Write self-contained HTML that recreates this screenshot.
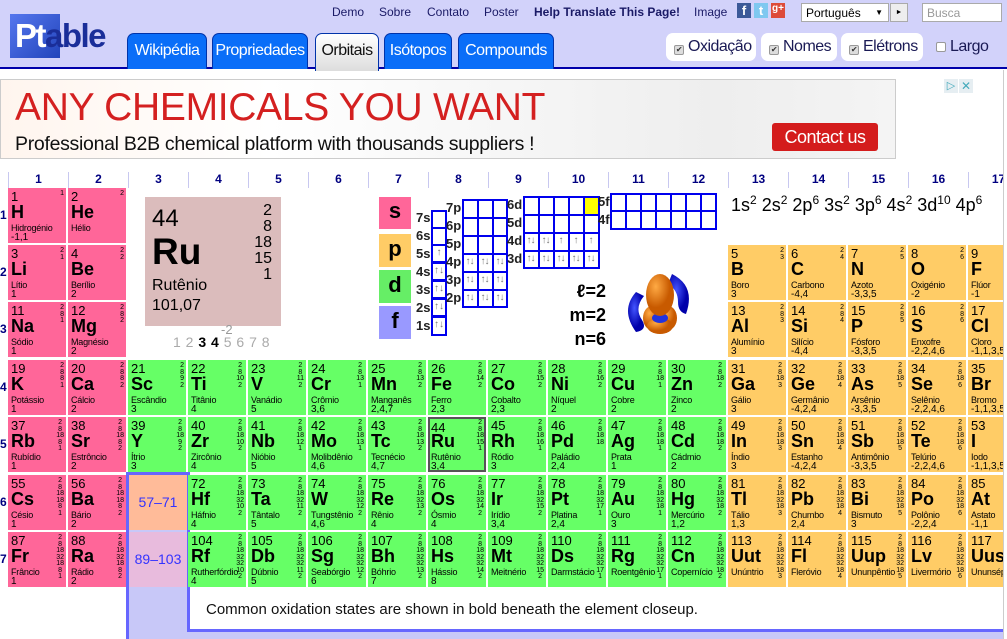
<!DOCTYPE html>
<html><head><meta charset="utf-8">
<style>
*{margin:0;padding:0;box-sizing:border-box}
body{width:1007px;height:639px;overflow:hidden;position:relative;background:#fff;font-family:"Liberation Sans",sans-serif;color:#000}
.a{position:absolute}
#hd{left:0;top:0;width:1007px;height:69px;background:#d2d2fa;border-bottom:2px solid #0000aa}
.lk{position:absolute;top:5px;font-size:12px;color:#1a1a66}
.tab{position:absolute;top:33px;height:36px;background:#0a6ef8;border:1px solid #0033aa;border-bottom:none;border-radius:7px 7px 0 0;color:#fff;font-size:16px;text-align:center;line-height:34px;letter-spacing:-0.5px}
.pill{position:absolute;top:33px;height:28px;background:#fff;border-radius:7px;font-size:16px;line-height:28px;color:#1a1a55;padding-left:8px;letter-spacing:-0.5px}
.cb{display:inline-block;width:10px;height:10px;border:1px solid #999;border-radius:2px;background:#ddd;margin-right:4px;vertical-align:-1px;font-size:8px;line-height:8px;text-align:center;color:#333}
.c{position:absolute;width:58px;height:55px;overflow:hidden}
.c i{position:absolute;left:3px;top:1px;font-size:13px;font-style:normal}
.c b{position:absolute;left:3px;top:14px;font-size:18px}
.c u{position:absolute;left:3px;top:35px;font-size:9px;text-decoration:none;white-space:nowrap;letter-spacing:-0.2px}
.c em{position:absolute;left:3px;top:45px;font-size:10px;font-style:normal;line-height:10px}
.c s{position:absolute;right:2px;top:3px;font-size:7px;line-height:6.5px;text-align:center;text-decoration:none}
.S{background:#ff6699}.D{background:#66ff66}.P{background:#ffcc66}
.gh{position:absolute;top:172px;width:60px;text-align:center;font-size:12px;font-weight:bold;color:#000080;border-left:1px solid #c8c8f0;height:16px}
.pn{position:absolute;left:0;font-size:12px;font-weight:bold;color:#000080}
.bx{position:absolute;border:2px solid #0000ee;background:#fff;font-size:10px;color:#777;line-height:14px;text-align:center;overflow:hidden}
.ol{position:absolute;font-size:13px;font-weight:bold;color:#222}
.ar{position:absolute;width:15px;text-align:center;font-size:10px;color:#777;line-height:18px;height:18px;letter-spacing:-1px}
</style></head><body>
<div id="hd" class="a"></div>
<div class="a" style="left:10px;top:14px;width:50px;height:44px;background:linear-gradient(135deg,#5577ee,#2244bb)"></div>
<div class="a" style="left:15px;top:17px;font-size:33px;font-weight:bold;letter-spacing:-1.5px;color:#fff">Pt<span style="color:#1a2e99">able</span></div>
<span class="lk" style="left:332px">Demo</span><span class="lk" style="left:379px">Sobre</span><span class="lk" style="left:427px">Contato</span><span class="lk" style="left:484px">Poster</span><span class="lk" style="left:534px;font-weight:bold">Help Translate This Page!</span><span class="lk" style="left:694px">Image</span>
<div class="a" style="left:737px;top:3px;width:14px;height:15px;background:#3b5998;color:#fff;font-weight:bold;font-size:13px;text-align:center">f</div>
<div class="a" style="left:754px;top:3px;width:14px;height:15px;background:#7fc8f0;color:#fff;font-weight:bold;font-size:13px;text-align:center">t</div>
<div class="a" style="left:771px;top:3px;width:14px;height:15px;background:#dd4b39;color:#fff;font-weight:bold;font-size:10px;text-align:center">g+</div>
<div class="a" style="left:801px;top:3px;width:88px;height:19px;background:#fff;border:1px solid #aaa;font-size:12px;padding:2px 4px">Português<span style="position:absolute;right:5px;font-size:8px;top:4px">▼</span></div>
<div class="a" style="left:890px;top:3px;width:18px;height:19px;background:#eee;border:1px solid #aaa;font-size:7px;text-align:center;line-height:17px">►</div>
<div class="a" style="left:922px;top:3px;width:80px;height:19px;background:#fff;border:1px solid #aaa;font-size:12px;padding:2px 4px;color:#999">Busca</div>
<div class="tab" style="left:127px;width:80px">Wikipédia</div>
<div class="tab" style="left:212px;width:96px">Propriedades</div>
<div class="tab" style="left:315px;width:64px;background:linear-gradient(#fff,#ddd);color:#111;border-color:#0033aa;height:38px">Orbitais</div>
<div class="tab" style="left:384px;width:68px">Isótopos</div>
<div class="tab" style="left:458px;width:96px">Compounds</div>
<div class="pill" style="left:666px;width:90px"><span class="cb">✔</span>Oxidação</div>
<div class="pill" style="left:761px;width:76px"><span class="cb">✔</span>Nomes</div>
<div class="pill" style="left:841px;width:82px"><span class="cb">✔</span>Elétrons</div>
<div class="a" style="left:936px;top:33px;font-size:16px;line-height:28px;color:#1a1a55;letter-spacing:-0.5px"><span class="cb" style="background:#fff"></span>Largo</div>

<div class="a" style="left:0;top:79px;width:896px;height:80px;border:1px solid #ccc;background:linear-gradient(90deg,#fff5ee,#fff 30%,#eee 80%,#f4f4f4)"></div>
<div class="a" style="left:15px;top:86px;font-size:39px;color:#d42020;letter-spacing:-0.3px">ANY CHEMICALS YOU WANT</div>
<div class="a" style="left:15px;top:133px;font-size:19.5px;color:#111;letter-spacing:-0.3px">Professional B2B chemical platform with thousands suppliers !</div>
<div class="a" style="left:772px;top:123px;width:106px;height:28px;background:#d41c1c;border-radius:3px;color:#fff;font-size:18px;text-align:center;line-height:28px;letter-spacing:-0.5px">Contact us</div>
<div class="a" style="left:944px;top:79px;width:14px;height:14px;background:#e6eef2;color:#4ab;font-size:11px;text-align:center">▷</div>
<div class="a" style="left:959px;top:79px;width:14px;height:14px;background:#e6eef2;color:#4ab;font-size:12px;text-align:center;line-height:14px">✕</div>

<div class="gh" style="left:8px">1</div><div class="gh" style="left:68px">2</div><div class="gh" style="left:128px">3</div><div class="gh" style="left:188px">4</div><div class="gh" style="left:248px">5</div><div class="gh" style="left:308px">6</div><div class="gh" style="left:368px">7</div><div class="gh" style="left:428px">8</div><div class="gh" style="left:488px">9</div><div class="gh" style="left:548px">10</div><div class="gh" style="left:608px">11</div><div class="gh" style="left:668px">12</div><div class="gh" style="left:728px">13</div><div class="gh" style="left:788px">14</div><div class="gh" style="left:848px">15</div><div class="gh" style="left:908px">16</div><div class="gh" style="left:968px">17</div>
<div class="pn" style="top:208px">1</div><div class="pn" style="top:265px">2</div><div class="pn" style="top:322px">3</div><div class="pn" style="top:380px">4</div><div class="pn" style="top:437px">5</div><div class="pn" style="top:495px">6</div><div class="pn" style="top:552px">7</div>

<!-- lanthanide area -->
<div class="a" style="left:126px;top:472px;width:64px;height:167px;background:#c8c8f8;border:3px solid #6666ff;border-bottom:none"></div>
<div class="a" style="left:187px;top:629px;width:816px;height:3px;background:#6666ff"></div>
<div class="a" style="left:187px;top:632px;width:816px;height:7px;background:#c8c8f8"></div>
<div class="a" style="left:129px;top:475px;width:58px;height:55px;background:#ffbb99;color:#3333ff;font-size:14px;text-align:center;line-height:55px">57–71</div>
<div class="a" style="left:129px;top:532px;width:58px;height:55px;background:#e8bbdd;color:#3333ff;font-size:14px;text-align:center;line-height:55px">89–103</div>
<div class="a" style="left:206px;top:601px;font-size:15px;color:#111">Common oxidation states are shown in bold beneath the element closeup.</div>

<!-- closeup -->
<div class="a" style="left:145px;top:197px;width:136px;height:129px;background:#dbbcbc"></div>
<div class="a" style="left:152px;top:205px;font-size:24px">44</div>
<div class="a" style="left:152px;top:231px;font-size:37px;font-weight:bold">Ru</div>
<div class="a" style="left:240px;top:203px;width:32px;font-size:16px;line-height:16px;text-align:right">2<br>8<br>18<br>15<br>1</div>
<div class="a" style="left:152px;top:277px;font-size:16px">Rutênio</div>
<div class="a" style="left:152px;top:297px;font-size:16px">101,07</div>
<div class="a" style="left:221px;top:322px;font-size:13px;color:#999">-2</div>
<div class="a" style="left:173px;top:334px;font-size:14px;color:#aaa;letter-spacing:0.5px">1 2 <b style="color:#000">3 4</b> 5 6 7 8</div>

<!-- spdf -->
<div class="a" style="left:379px;top:197px;width:32px;height:32px;background:#ff6699;font-size:22px;text-align:center;line-height:28px;font-weight:bold">s</div>
<div class="a" style="left:379px;top:234px;width:32px;height:33px;background:#ffcc66;font-size:22px;text-align:center;line-height:30px;font-weight:bold">p</div>
<div class="a" style="left:379px;top:270px;width:32px;height:33px;background:#66ee66;font-size:22px;text-align:center;line-height:30px;font-weight:bold">d</div>
<div class="a" style="left:379px;top:306px;width:32px;height:33px;background:#9999ff;font-size:22px;text-align:center;line-height:30px;font-weight:bold">f</div>
<!-- s column -->
<div class="ol" style="left:416px;top:210px">7s</div><div class="ol" style="left:416px;top:228px">6s</div><div class="ol" style="left:416px;top:246px">5s</div><div class="ol" style="left:416px;top:264px">4s</div><div class="ol" style="left:416px;top:282px">3s</div><div class="ol" style="left:416px;top:300px">2s</div><div class="ol" style="left:416px;top:318px">1s</div>
<div class="bx" style="left:431px;top:210px;width:16px;height:19px"></div>
<div class="bx" style="left:431px;top:227px;width:16px;height:19px"></div>
<div class="bx" style="left:431px;top:244px;width:16px;height:19px">↑</div>
<div class="bx" style="left:431px;top:262px;width:16px;height:19px">↑↓</div>
<div class="bx" style="left:431px;top:280px;width:16px;height:19px">↑↓</div>
<div class="bx" style="left:431px;top:298px;width:16px;height:19px">↑↓</div>
<div class="bx" style="left:431px;top:316px;width:16px;height:20px">↑↓</div>
<!-- p -->
<div class="ol" style="left:446px;top:200px">7p</div><div class="ol" style="left:446px;top:218px">6p</div><div class="ol" style="left:446px;top:236px">5p</div><div class="ol" style="left:446px;top:254px">4p</div><div class="ol" style="left:446px;top:272px">3p</div><div class="ol" style="left:446px;top:290px">2p</div>
<div class="a" style="left:462px;top:199px">
<svg width="46" height="109" style="position:absolute;left:0;top:0"><g fill="none" stroke="#0000ee" stroke-width="2"><rect x="1" y="1" width="44" height="107"/><path d="M16 1V108M31 1V108M1 19H45M1 37H45M1 55H45M1 73H45M1 91H45"/></g></svg>
</div>
<div class="ar" style="left:462px;top:253px">↑↓</div><div class="ar" style="left:477px;top:253px">↑↓</div><div class="ar" style="left:492px;top:253px">↑↓</div>
<div class="ar" style="left:462px;top:271px">↑↓</div><div class="ar" style="left:477px;top:271px">↑↓</div><div class="ar" style="left:492px;top:271px">↑↓</div>
<div class="ar" style="left:462px;top:289px">↑↓</div><div class="ar" style="left:477px;top:289px">↑↓</div><div class="ar" style="left:492px;top:289px">↑↓</div>
<!-- d -->
<div class="ol" style="left:507px;top:197px">6d</div><div class="ol" style="left:507px;top:215px">5d</div><div class="ol" style="left:507px;top:233px">4d</div><div class="ol" style="left:507px;top:251px">3d</div>
<div class="a" style="left:583px;top:197px;width:15px;height:17px;background:#ffff00"></div>
<div class="a" style="left:523px;top:196px"><svg width="77" height="73"><g fill="none" stroke="#0000ee" stroke-width="2"><rect x="1" y="1" width="75" height="71"/><path d="M16 1V72M31 1V72M46 1V72M61 1V72M1 19H76M1 37H76M1 55H76"/></g></svg></div>
<div class="ar" style="left:523px;top:232px">↑↓</div><div class="ar" style="left:538px;top:232px">↑↓</div><div class="ar" style="left:553px;top:232px">↑</div><div class="ar" style="left:568px;top:232px">↑</div><div class="ar" style="left:583px;top:232px">↑</div>
<div class="ar" style="left:523px;top:250px">↑↓</div><div class="ar" style="left:538px;top:250px">↑↓</div><div class="ar" style="left:553px;top:250px">↑↓</div><div class="ar" style="left:568px;top:250px">↑↓</div><div class="ar" style="left:583px;top:250px">↑↓</div>
<!-- f -->
<div class="ol" style="left:598px;top:194px">5f</div><div class="ol" style="left:598px;top:212px">4f</div>
<div class="a" style="left:610px;top:193px"><svg width="107" height="37"><g fill="none" stroke="#0000ee" stroke-width="2"><rect x="1" y="1" width="105" height="35"/><path d="M16 1V36M31 1V36M46 1V36M61 1V36M76 1V36M91 1V36M1 18H106"/></g></svg></div>
<!-- quantum numbers -->
<div class="a" style="left:560px;top:279px;width:46px;text-align:right;font-size:18px;font-weight:bold;line-height:24px">ℓ=2<br>m=2<br>n=6</div>
<svg class="a" style="left:622px;top:268px" width="72" height="70">
<defs><radialGradient id="o" cx="35%" cy="30%"><stop offset="0" stop-color="#ffaa44"/><stop offset="1" stop-color="#c85a00"/></radialGradient><radialGradient id="b" cx="40%" cy="40%"><stop offset="0" stop-color="#4455ff"/><stop offset="1" stop-color="#0000aa"/></radialGradient></defs>
<path d="M14 24 Q-2 42 14 64 Q26 62 20 52 Q12 40 22 28 Z" fill="url(#b)"/>
<path d="M50 6 Q74 18 64 46 Q56 44 56 34 Q56 22 46 16 Z" fill="url(#b)"/>
<ellipse cx="30" cy="50" rx="9" ry="12" fill="url(#o)"/>
<ellipse cx="46" cy="50" rx="9" ry="12" fill="url(#o)"/>
<ellipse cx="38" cy="58" rx="13" ry="8" fill="url(#o)"/>
<ellipse cx="38" cy="50" rx="8" ry="5" fill="#2233dd"/>
<ellipse cx="38" cy="27" rx="14" ry="21" fill="url(#o)"/>
</svg>
<div class="a" style="left:731px;top:193px;font-size:18px;white-space:nowrap">1s<sup style="font-size:12px">2</sup> 2s<sup style="font-size:12px">2</sup> 2p<sup style="font-size:12px">6</sup> 3s<sup style="font-size:12px">2</sup> 3p<sup style="font-size:12px">6</sup> 4s<sup style="font-size:12px">2</sup> 3d<sup style="font-size:12px">10</sup> 4p<sup style="font-size:12px">6</sup></div>

<!-- period 1 -->
<div class="c S" style="left:8px;top:188px"><i>1</i><b>H</b><u>Hidrogénio</u><em>-1,1</em><s>1</s></div>
<div class="c S" style="left:68px;top:188px"><i>2</i><b>He</b><u>Hélio</u><s>2</s></div>
<!-- period 2 -->
<div class="c S" style="left:8px;top:245px"><i>3</i><b>Li</b><u>Lítio</u><em>1</em><s>2<br>1</s></div>
<div class="c S" style="left:68px;top:245px"><i>4</i><b>Be</b><u>Berílio</u><em>2</em><s>2<br>2</s></div>
<div class="c P" style="left:728px;top:245px"><i>5</i><b>B</b><u>Boro</u><em>3</em><s>2<br>3</s></div>
<div class="c P" style="left:788px;top:245px"><i>6</i><b>C</b><u>Carbono</u><em>-4,4</em><s>2<br>4</s></div>
<div class="c P" style="left:848px;top:245px"><i>7</i><b>N</b><u>Azoto</u><em>-3,3,5</em><s>2<br>5</s></div>
<div class="c P" style="left:908px;top:245px"><i>8</i><b>O</b><u>Oxigénio</u><em>-2</em><s>2<br>6</s></div>
<div class="c P" style="left:968px;top:245px"><i>9</i><b>F</b><u>Flúor</u><em>-1</em><s>2<br>7</s></div>
<!-- period 3 -->
<div class="c S" style="left:8px;top:302px"><i>11</i><b>Na</b><u>Sódio</u><em>1</em><s>2<br>8<br>1</s></div>
<div class="c S" style="left:68px;top:302px"><i>12</i><b>Mg</b><u>Magnésio</u><em>2</em><s>2<br>8<br>2</s></div>
<div class="c P" style="left:728px;top:302px"><i>13</i><b>Al</b><u>Alumínio</u><em>3</em><s>2<br>8<br>3</s></div>
<div class="c P" style="left:788px;top:302px"><i>14</i><b>Si</b><u>Silício</u><em>-4,4</em><s>2<br>8<br>4</s></div>
<div class="c P" style="left:848px;top:302px"><i>15</i><b>P</b><u>Fósforo</u><em>-3,3,5</em><s>2<br>8<br>5</s></div>
<div class="c P" style="left:908px;top:302px"><i>16</i><b>S</b><u>Enxofre</u><em>-2,2,4,6</em><s>2<br>8<br>6</s></div>
<div class="c P" style="left:968px;top:302px"><i>17</i><b>Cl</b><u>Cloro</u><em>-1,1,3,5,7</em><s>2<br>8<br>7</s></div>
<!-- period 4 -->
<div class="c S" style="left:8px;top:360px"><i>19</i><b>K</b><u>Potássio</u><em>1</em><s>2<br>8<br>8<br>1</s></div>
<div class="c S" style="left:68px;top:360px"><i>20</i><b>Ca</b><u>Cálcio</u><em>2</em><s>2<br>8<br>8<br>2</s></div>
<div class="c D" style="left:128px;top:360px"><i>21</i><b>Sc</b><u>Escândio</u><em>3</em><s>2<br>8<br>9<br>2</s></div>
<div class="c D" style="left:188px;top:360px"><i>22</i><b>Ti</b><u>Titânio</u><em>4</em><s>2<br>8<br>10<br>2</s></div>
<div class="c D" style="left:248px;top:360px"><i>23</i><b>V</b><u>Vanádio</u><em>5</em><s>2<br>8<br>11<br>2</s></div>
<div class="c D" style="left:308px;top:360px"><i>24</i><b>Cr</b><u>Crômio</u><em>3,6</em><s>2<br>8<br>13<br>1</s></div>
<div class="c D" style="left:368px;top:360px"><i>25</i><b>Mn</b><u>Manganês</u><em>2,4,7</em><s>2<br>8<br>13<br>2</s></div>
<div class="c D" style="left:428px;top:360px"><i>26</i><b>Fe</b><u>Ferro</u><em>2,3</em><s>2<br>8<br>14<br>2</s></div>
<div class="c D" style="left:488px;top:360px"><i>27</i><b>Co</b><u>Cobalto</u><em>2,3</em><s>2<br>8<br>15<br>2</s></div>
<div class="c D" style="left:548px;top:360px"><i>28</i><b>Ni</b><u>Níquel</u><em>2</em><s>2<br>8<br>16<br>2</s></div>
<div class="c D" style="left:608px;top:360px"><i>29</i><b>Cu</b><u>Cobre</u><em>2</em><s>2<br>8<br>18<br>1</s></div>
<div class="c D" style="left:668px;top:360px"><i>30</i><b>Zn</b><u>Zinco</u><em>2</em><s>2<br>8<br>18<br>2</s></div>
<div class="c P" style="left:728px;top:360px"><i>31</i><b>Ga</b><u>Gálio</u><em>3</em><s>2<br>8<br>18<br>3</s></div>
<div class="c P" style="left:788px;top:360px"><i>32</i><b>Ge</b><u>Germânio</u><em>-4,2,4</em><s>2<br>8<br>18<br>4</s></div>
<div class="c P" style="left:848px;top:360px"><i>33</i><b>As</b><u>Arsênio</u><em>-3,3,5</em><s>2<br>8<br>18<br>5</s></div>
<div class="c P" style="left:908px;top:360px"><i>34</i><b>Se</b><u>Selênio</u><em>-2,2,4,6</em><s>2<br>8<br>18<br>6</s></div>
<div class="c P" style="left:968px;top:360px"><i>35</i><b>Br</b><u>Bromo</u><em>-1,1,3,5,7</em><s>2<br>8<br>18<br>7</s></div>
<!-- period 5 -->
<div class="c S" style="left:8px;top:417px"><i>37</i><b>Rb</b><u>Rubídio</u><em>1</em><s>2<br>8<br>18<br>8<br>1</s></div>
<div class="c S" style="left:68px;top:417px"><i>38</i><b>Sr</b><u>Estrôncio</u><em>2</em><s>2<br>8<br>18<br>8<br>2</s></div>
<div class="c D" style="left:128px;top:417px"><i>39</i><b>Y</b><u>Ítrio</u><em>3</em><s>2<br>8<br>18<br>9<br>2</s></div>
<div class="c D" style="left:188px;top:417px"><i>40</i><b>Zr</b><u>Zircônio</u><em>4</em><s>2<br>8<br>18<br>10<br>2</s></div>
<div class="c D" style="left:248px;top:417px"><i>41</i><b>Nb</b><u>Nióbio</u><em>5</em><s>2<br>8<br>18<br>12<br>1</s></div>
<div class="c D" style="left:308px;top:417px"><i>42</i><b>Mo</b><u>Molibdênio</u><em>4,6</em><s>2<br>8<br>18<br>13<br>1</s></div>
<div class="c D" style="left:368px;top:417px"><i>43</i><b>Tc</b><u>Tecnécio</u><em>4,7</em><s>2<br>8<br>18<br>13<br>2</s></div>
<div class="c D" style="left:428px;top:417px;border:2px solid #555"><i style="left:1px">44</i><b style="left:1px;top:12px">Ru</b><u style="left:1px;top:33px">Rutênio</u><em style="left:1px;top:43px">3,4</em><s style="right:0;top:1px">2<br>8<br>18<br>15<br>1</s></div>
<div class="c D" style="left:488px;top:417px"><i>45</i><b>Rh</b><u>Ródio</u><em>3</em><s>2<br>8<br>18<br>16<br>1</s></div>
<div class="c D" style="left:548px;top:417px"><i>46</i><b>Pd</b><u>Paládio</u><em>2,4</em><s>2<br>8<br>18<br>18</s></div>
<div class="c D" style="left:608px;top:417px"><i>47</i><b>Ag</b><u>Prata</u><em>1</em><s>2<br>8<br>18<br>18<br>1</s></div>
<div class="c D" style="left:668px;top:417px"><i>48</i><b>Cd</b><u>Cádmio</u><em>2</em><s>2<br>8<br>18<br>18<br>2</s></div>
<div class="c P" style="left:728px;top:417px"><i>49</i><b>In</b><u>Índio</u><em>3</em><s>2<br>8<br>18<br>18<br>3</s></div>
<div class="c P" style="left:788px;top:417px"><i>50</i><b>Sn</b><u>Estanho</u><em>-4,2,4</em><s>2<br>8<br>18<br>18<br>4</s></div>
<div class="c P" style="left:848px;top:417px"><i>51</i><b>Sb</b><u>Antimônio</u><em>-3,3,5</em><s>2<br>8<br>18<br>18<br>5</s></div>
<div class="c P" style="left:908px;top:417px"><i>52</i><b>Te</b><u>Telúrio</u><em>-2,2,4,6</em><s>2<br>8<br>18<br>18<br>6</s></div>
<div class="c P" style="left:968px;top:417px"><i>53</i><b>I</b><u>Iodo</u><em>-1,1,3,5,7</em><s>2<br>8<br>18<br>18<br>7</s></div>
<!-- period 6 -->
<div class="c S" style="left:8px;top:475px"><i>55</i><b>Cs</b><u>Césio</u><em>1</em><s>2<br>8<br>18<br>18<br>8<br>1</s></div>
<div class="c S" style="left:68px;top:475px"><i>56</i><b>Ba</b><u>Bário</u><em>2</em><s>2<br>8<br>18<br>18<br>8<br>2</s></div>
<div class="c D" style="left:188px;top:475px"><i>72</i><b>Hf</b><u>Háfnio</u><em>4</em><s>2<br>8<br>18<br>32<br>10<br>2</s></div>
<div class="c D" style="left:248px;top:475px"><i>73</i><b>Ta</b><u>Tântalo</u><em>5</em><s>2<br>8<br>18<br>32<br>11<br>2</s></div>
<div class="c D" style="left:308px;top:475px"><i>74</i><b>W</b><u>Tungstênio</u><em>4,6</em><s>2<br>8<br>18<br>32<br>12<br>2</s></div>
<div class="c D" style="left:368px;top:475px"><i>75</i><b>Re</b><u>Rênio</u><em>4</em><s>2<br>8<br>18<br>32<br>13<br>2</s></div>
<div class="c D" style="left:428px;top:475px"><i>76</i><b>Os</b><u>Ósmio</u><em>4</em><s>2<br>8<br>18<br>32<br>14<br>2</s></div>
<div class="c D" style="left:488px;top:475px"><i>77</i><b>Ir</b><u>Irídio</u><em>3,4</em><s>2<br>8<br>18<br>32<br>15<br>2</s></div>
<div class="c D" style="left:548px;top:475px"><i>78</i><b>Pt</b><u>Platina</u><em>2,4</em><s>2<br>8<br>18<br>32<br>17<br>1</s></div>
<div class="c D" style="left:608px;top:475px"><i>79</i><b>Au</b><u>Ouro</u><em>3</em><s>2<br>8<br>18<br>32<br>18<br>1</s></div>
<div class="c D" style="left:668px;top:475px"><i>80</i><b>Hg</b><u>Mercúrio</u><em>1,2</em><s>2<br>8<br>18<br>32<br>18<br>2</s></div>
<div class="c P" style="left:728px;top:475px"><i>81</i><b>Tl</b><u>Tálio</u><em>1,3</em><s>2<br>8<br>18<br>32<br>18<br>3</s></div>
<div class="c P" style="left:788px;top:475px"><i>82</i><b>Pb</b><u>Chumbo</u><em>2,4</em><s>2<br>8<br>18<br>32<br>18<br>4</s></div>
<div class="c P" style="left:848px;top:475px"><i>83</i><b>Bi</b><u>Bismuto</u><em>3</em><s>2<br>8<br>18<br>32<br>18<br>5</s></div>
<div class="c P" style="left:908px;top:475px"><i>84</i><b>Po</b><u>Polônio</u><em>-2,2,4</em><s>2<br>8<br>18<br>32<br>18<br>6</s></div>
<div class="c P" style="left:968px;top:475px"><i>85</i><b>At</b><u>Astato</u><em>-1,1</em><s>2<br>8<br>18<br>32<br>18<br>7</s></div>
<!-- period 7 -->
<div class="c S" style="left:8px;top:532px"><i>87</i><b>Fr</b><u>Frâncio</u><em>1</em><s>2<br>8<br>18<br>32<br>18<br>8<br>1</s></div>
<div class="c S" style="left:68px;top:532px"><i>88</i><b>Ra</b><u>Rádio</u><em>2</em><s>2<br>8<br>18<br>32<br>18<br>8<br>2</s></div>
<div class="c D" style="left:188px;top:532px"><i>104</i><b>Rf</b><u>Rutherfórdio</u><em>4</em><s>2<br>8<br>18<br>32<br>32<br>10<br>2</s></div>
<div class="c D" style="left:248px;top:532px"><i>105</i><b>Db</b><u>Dúbnio</u><em>5</em><s>2<br>8<br>18<br>32<br>32<br>11<br>2</s></div>
<div class="c D" style="left:308px;top:532px"><i>106</i><b>Sg</b><u>Seabórgio</u><em>6</em><s>2<br>8<br>18<br>32<br>32<br>12<br>2</s></div>
<div class="c D" style="left:368px;top:532px"><i>107</i><b>Bh</b><u>Bóhrio</u><em>7</em><s>2<br>8<br>18<br>32<br>32<br>13<br>2</s></div>
<div class="c D" style="left:428px;top:532px"><i>108</i><b>Hs</b><u>Hássio</u><em>8</em><s>2<br>8<br>18<br>32<br>32<br>14<br>2</s></div>
<div class="c D" style="left:488px;top:532px"><i>109</i><b>Mt</b><u>Meitnério</u><s>2<br>8<br>18<br>32<br>32<br>15<br>2</s></div>
<div class="c D" style="left:548px;top:532px"><i>110</i><b>Ds</b><u>Darmstácio</u><s>2<br>8<br>18<br>32<br>32<br>17<br>1</s></div>
<div class="c D" style="left:608px;top:532px"><i>111</i><b>Rg</b><u>Roentgênio</u><s>2<br>8<br>18<br>32<br>32<br>17<br>1</s></div>
<div class="c D" style="left:668px;top:532px"><i>112</i><b>Cn</b><u>Copernício</u><s>2<br>8<br>18<br>32<br>32<br>18<br>2</s></div>
<div class="c P" style="left:728px;top:532px"><i>113</i><b>Uut</b><u>Unúntrio</u><s>2<br>8<br>18<br>32<br>32<br>18<br>3</s></div>
<div class="c P" style="left:788px;top:532px"><i>114</i><b>Fl</b><u>Fleróvio</u><s>2<br>8<br>18<br>32<br>32<br>18<br>4</s></div>
<div class="c P" style="left:848px;top:532px"><i>115</i><b>Uup</b><u>Ununpêntio</u><s>2<br>8<br>18<br>32<br>32<br>18<br>5</s></div>
<div class="c P" style="left:908px;top:532px"><i>116</i><b>Lv</b><u>Livermório</u><s>2<br>8<br>18<br>32<br>32<br>18<br>6</s></div>
<div class="c P" style="left:968px;top:532px"><i>117</i><b>Uus</b><u>Ununséptio</u><s>2<br>8<br>18<br>32<br>32<br>18<br>7</s></div>
<div class="a" style="left:1003px;top:70px;width:4px;height:569px;background:#fff;border-left:1px solid #ccc"></div>
</body></html>
